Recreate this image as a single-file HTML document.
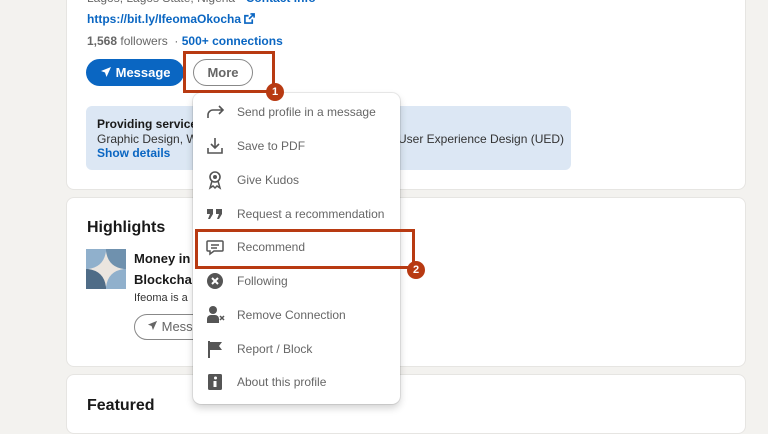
<!DOCTYPE html>
<html><head><meta charset="utf-8"><style>
*{margin:0;padding:0;box-sizing:border-box}
body{width:768px;height:423px;overflow:hidden;background:#f3f2ef;font-family:"Liberation Sans",sans-serif;position:relative;color:#191919}
.card{position:absolute;left:66px;width:680px;background:#fff;border-radius:8px;border:1px solid #e6e5e2}
.t{position:absolute;white-space:nowrap}
.blue{color:#0a66c2;font-weight:bold}
.menu{position:absolute;left:193px;top:93px;width:207px;height:311px;background:#fff;border-radius:8px;box-shadow:0 0 0 1px rgba(0,0,0,.08),0 4px 8px rgba(0,0,0,.18)}
.it{position:absolute;left:44px;font-size:12px;color:#666;white-space:nowrap}
.ic{position:absolute;left:12px;width:20px;height:20px}
.red{position:absolute;border:3px solid #b83a12}
.badge{position:absolute;width:18px;height:18px;border-radius:50%;background:#b83a12;color:#fff;font-size:11px;font-weight:bold;text-align:center;line-height:18px}
</style></head><body>
<div class="card" style="top:-10px;height:200px"></div>
<div class="card" style="top:197px;height:170px"></div>
<div class="card" style="top:374px;height:60px"></div>

<div class="t" style="left:87px;top:-9px;font-size:12px;color:#666">Lagos, Lagos State, Nigeria · <span class="blue">Contact info</span></div>
<div class="t blue" style="left:87px;top:12px;font-size:12px">https://bit.ly/IfeomaOkocha <svg width="11" height="11" viewBox="0 0 12 12" style="vertical-align:-1px"><path d="M7 1h4v4M11 1L5.5 6.5M9 7v4H1V3h4" fill="none" stroke="#0a66c2" stroke-width="1.8"/></svg></div>
<div class="t" style="left:87px;top:34px;font-size:12px;color:#666"><b style="color:#666">1,568</b> followers &nbsp;· <span class="blue">500+ connections</span></div>

<div class="t" style="left:86px;top:59px;width:98px;height:27px;border-radius:14px;background:#0a66c2;color:#fff;font-size:13px;font-weight:bold;line-height:27px;padding-left:14px"><svg width="12" height="12" viewBox="0 0 12 12" style="vertical-align:-1px"><path d="M11 1L1 5l4 1.5L6.5 11z" fill="#fff"/></svg> Message</div>
<div class="t" style="left:193px;top:59px;width:60px;height:27px;border-radius:14px;border:1px solid #888;color:#666;font-size:13px;font-weight:bold;line-height:25px;text-align:center">More</div>

<div class="t" style="left:86px;top:106px;width:485px;height:64px;background:#dce7f4;border-radius:6px"></div>
<div class="t" style="left:97px;top:117px;font-size:12px;font-weight:bold">Providing services</div>
<div class="t" style="left:97px;top:132px;font-size:12px;color:#333">Graphic Design, W</div>
<div class="t" style="left:398px;top:132px;font-size:12px;color:#333">User Experience Design (UED)</div>
<div class="t blue" style="left:97px;top:146px;font-size:12px">Show details</div>

<div class="t" style="left:87px;top:219px;font-size:16px;font-weight:bold;color:#191919">Highlights</div>
<svg class="t" style="left:86px;top:249px" width="40" height="40" viewBox="0 0 40 40"><rect width="40" height="40" fill="#90b0cc"/><rect x="20" width="20" height="20" fill="#6f91ae"/><rect y="20" width="20" height="20" fill="#4f6c87"/><path d="M20 2Q22 18 38 20Q22 22 20 38Q18 22 2 20Q18 18 20 2z" fill="#ebe5df"/></svg>
<div class="t" style="left:134px;top:251px;font-size:13px;font-weight:bold">Money in</div>
<div class="t" style="left:134px;top:272px;font-size:13px;font-weight:bold">Blockcha</div>
<div class="t" style="left:134px;top:292px;font-size:11px;color:#333">Ifeoma is a</div>
<div class="t" style="left:134px;top:314px;width:80px;height:26px;border-radius:13px;border:1px solid #888;color:#666;font-size:13px;line-height:24px;padding-left:12px"><svg width="11" height="11" viewBox="0 0 12 12"><path d="M11 1L1 5l4 1.5L6.5 11z" fill="#666"/></svg> Mess</div>

<div class="t" style="left:87px;top:397px;font-size:16px;font-weight:bold">Featured</div>

<div class="menu">
<svg class="ic" style="top:9px" viewBox="0 0 20 20"><path d="M3 16v-3a5 5 0 0 1 5-5h10M14 4l4 4-4 4" fill="none" stroke="#555" stroke-width="1.6"/></svg>
<div class="it" style="top:12px">Send profile in a message</div>
<svg class="ic" style="top:43px" viewBox="0 0 20 20"><path d="M10 2v10M6 8l4 4 4-4M3 12v5h14v-5" fill="none" stroke="#555" stroke-width="1.6"/></svg>
<div class="it" style="top:46px">Save to PDF</div>
<svg class="ic" style="top:77px" viewBox="0 0 20 20"><circle cx="10" cy="7" r="5" fill="none" stroke="#555" stroke-width="1.6"/><circle cx="10" cy="7" r="2" fill="#555"/><path d="M7 11l-2 7 3-2 2 2 2-2 3 2-2-7" fill="none" stroke="#555" stroke-width="1.5"/></svg>
<div class="it" style="top:80px">Give Kudos</div>
<svg class="ic" style="top:111px" viewBox="0 0 20 20"><path d="M2 5h6v5l-3 5H3l2-5H2zM11 5h6v5l-3 5h-2l2-5h-3z" fill="#555"/></svg>
<div class="it" style="top:114px">Request a recommendation</div>
<svg class="ic" style="top:144px" viewBox="0 0 20 20"><path d="M3 4h14a1 1 0 0 1 1 1v8a1 1 0 0 1-1 1h-8l-4 3v-3H3a1 1 0 0 1-1-1V5a1 1 0 0 1 1-1zM6 8h8M6 11h6" fill="none" stroke="#555" stroke-width="1.5"/></svg>
<div class="it" style="top:147px">Recommend</div>
<svg class="ic" style="top:178px" viewBox="0 0 20 20"><circle cx="10" cy="10" r="8" fill="#555"/><path d="M7 7l6 6M13 7l-6 6" stroke="#fff" stroke-width="2"/></svg>
<div class="it" style="top:181px">Following</div>
<svg class="ic" style="top:212px" viewBox="0 0 20 20"><circle cx="8" cy="5" r="4" fill="#555"/><path d="M2 18v-4a4 4 0 0 1 4-4h4a4 4 0 0 1 4 4v4z" fill="#555"/><path d="M15 11l4 4M19 11l-4 4" stroke="#555" stroke-width="1.5"/></svg>
<div class="it" style="top:215px">Remove Connection</div>
<svg class="ic" style="top:246px" viewBox="0 0 20 20"><path d="M4 2v17" stroke="#555" stroke-width="2"/><path d="M5 3h12l-3 4 3 4H5z" fill="#555"/></svg>
<div class="it" style="top:249px">Report / Block</div>
<svg class="ic" style="top:279px" viewBox="0 0 20 20"><rect x="3" y="2" width="14" height="16" rx="1.5" fill="#555"/><circle cx="10.5" cy="6" r="1.5" fill="#fff"/><path d="M8.5 9h3v6h-3z" fill="#fff"/></svg>
<div class="it" style="top:282px">About this profile</div>
</div>

<div class="red" style="left:183px;top:51px;width:92px;height:42px"></div>
<div class="badge" style="left:266px;top:83px">1</div>
<div class="red" style="left:195px;top:229px;width:220px;height:40px"></div>
<div class="badge" style="left:407px;top:261px">2</div>
</body></html>
